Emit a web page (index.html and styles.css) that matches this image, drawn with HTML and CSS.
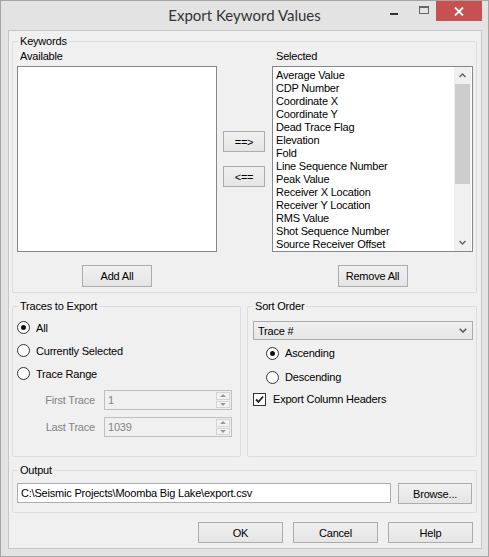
FILE: index.html
```html
<!DOCTYPE html>
<html lang="en">
<head>
    <meta charset="UTF-8">
    <title>Export Keyword Values</title>
    <link rel="stylesheet" href="styles.css">
</head>
<body>
<div class="window">

    <!-- タイトルバー -->
    <div class="titlebar">
        <div class="title">Export Keyword Values</div>
        <div class="tb-btn tb-min"><span class="min-bar"></span></div>
        <div class="tb-btn tb-max"><span class="max-box"></span></div>
        <div class="tb-btn tb-close">
            <svg width="10" height="9" viewBox="0 0 10 9"><path d="M1 0.5 L9 8.5 M9 0.5 L1 8.5" stroke="#fff" stroke-width="1.8" fill="none"/></svg>
        </div>
    </div>

    <div class="client">

        <!-- Keywords -->
        <fieldset class="group keywords">
            <legend>Keywords</legend>
            <div class="kw-cols">
                <div class="kw-col">
                    <div class="kw-label">Available</div>
                    <div class="listbox"></div>
                    <div class="kw-foot"><button class="btn btn-all">Add All</button></div>
                </div>
                <div class="kw-mid">
                    <button class="btn btn-arrow">==&gt;</button>
                    <button class="btn btn-arrow">&lt;==</button>
                </div>
                <div class="kw-col kw-right">
                    <div class="kw-label">Selected</div>
                    <div class="listbox">
                        <div class="items">
                            <div>Average Value</div>
                            <div>CDP Number</div>
                            <div>Coordinate X</div>
                            <div>Coordinate Y</div>
                            <div>Dead Trace Flag</div>
                            <div>Elevation</div>
                            <div>Fold</div>
                            <div>Line Sequence Number</div>
                            <div>Peak Value</div>
                            <div>Receiver X Location</div>
                            <div>Receiver Y Location</div>
                            <div>RMS Value</div>
                            <div>Shot Sequence Number</div>
                            <div>Source Receiver Offset</div>
                        </div>
                        <div class="vscroll">
                            <div class="sb-arrow"><svg width="7" height="5" viewBox="0 0 7 5"><path d="M0.5 4 L3.5 1 L6.5 4" stroke="#606060" stroke-width="1.4" fill="none"/></svg></div>
                            <div class="sb-thumb"></div>
                            <div class="sb-track"></div>
                            <div class="sb-arrow"><svg width="7" height="5" viewBox="0 0 7 5"><path d="M0.5 1 L3.5 4 L6.5 1" stroke="#606060" stroke-width="1.4" fill="none"/></svg></div>
                        </div>
                    </div>
                    <div class="kw-foot"><button class="btn btn-all">Remove All</button></div>
                </div>
            </div>
        </fieldset>

        <div class="mid-row">
            <!-- Traces to Export -->
            <fieldset class="group traces">
                <legend>Traces to Export</legend>
                <div class="radios">
                    <label class="opt"><span class="radio on"></span>All</label>
                    <label class="opt"><span class="radio"></span>Currently Selected</label>
                    <label class="opt"><span class="radio"></span>Trace Range</label>
                </div>
                <div class="spin-row">
                    <span class="spin-label">First Trace</span>
                    <div class="spin"><span class="spin-val">1</span><span class="spin-btns"><i class="up"></i><i class="down"></i></span></div>
                </div>
                <div class="spin-row">
                    <span class="spin-label">Last Trace</span>
                    <div class="spin"><span class="spin-val">1039</span><span class="spin-btns"><i class="up"></i><i class="down"></i></span></div>
                </div>
            </fieldset>

            <!-- Sort Order -->
            <fieldset class="group sort">
                <legend>Sort Order</legend>
                <div class="combo">
                    <span>Trace #</span>
                    <svg width="8" height="5" viewBox="0 0 8 5"><path d="M0.7 0.7 L4 4 L7.3 0.7" stroke="#555" stroke-width="1.5" fill="none"/></svg>
                </div>
                <div class="sort-radios">
                    <label class="opt"><span class="radio on"></span>Ascending</label>
                    <label class="opt"><span class="radio"></span>Descending</label>
                </div>
                <label class="check-row"><span class="check"><svg width="9" height="9" viewBox="0 0 9 9"><path d="M1 4.5 L3.5 7 L8 1.5" stroke="#222" stroke-width="1.8" fill="none"/></svg></span>Export Column Headers</label>
            </fieldset>
        </div>

        <!-- Output -->
        <fieldset class="group output">
            <legend>Output</legend>
            <div class="out-row">
                <div class="textbox">C:\Seismic Projects\Moomba Big Lake\export.csv</div>
                <button class="btn btn-browse">Browse...</button>
            </div>
        </fieldset>

        <div class="dlg-buttons">
            <button class="btn btn-dlg">OK</button>
            <button class="btn btn-dlg">Cancel</button>
            <button class="btn btn-dlg">Help</button>
        </div>
    </div>
</div>
</body>
</html>
```

FILE: styles.css
```css
/* ダイアログ全体 */
body {
    margin: 0;
    font-family: "Liberation Sans", Arial, sans-serif;
    font-size: 11px;
    letter-spacing: -0.2px;
    color: #000;
}

.window {
    width: 489px;
    height: 557px;
    box-sizing: border-box;
    border: 1px solid #a5a5a5;
    background: #e3e3e3;
    display: flex;
    flex-direction: column;
}

/* タイトルバー */
.titlebar {
    height: 29px;
    display: grid;
    grid-template-columns: 1fr 26px 26px 46px;
    margin-right: 6px;
}

.title {
    grid-column: 1 / -1;
    grid-row: 1;
    text-align: center;
    font-family: "Lato", "Open Sans", sans-serif;
    font-size: 15px;
    letter-spacing: 0;
    line-height: 29px;
    color: #333;
    margin-left: 6px;
}

.tb-btn {
    grid-row: 1;
    height: 20px;
    display: flex;
    align-items: center;
    justify-content: center;
}

.tb-min { grid-column: 2; }
.tb-max { grid-column: 3; }
.tb-close {
    grid-column: 4;
    background: #c75050;
}

.min-bar {
    width: 8px;
    height: 2px;
    background: #333;
    margin-top: 5px;
    margin-right: 6px;
}

.max-box {
    width: 8px;
    height: 5px;
    border: 1px solid #666;
    border-top-width: 2px;
    margin-top: -3px;
    margin-left: 2px;
}

.client {
    flex: 1;
    margin: 0 6px 7px 7px;
    border: 1px solid #c6c6c6;
    background: #f0f0f0;
    padding: 4px 4px 0 3px;
}

/* グループボックス */
.group {
    margin: 0;
    padding: 0;
    border: 1px solid #dcdcdc;
    border-radius: 2px;
    min-width: 0;
}

.group legend {
    margin-left: 1px;
    padding: 0 2px;
    line-height: 13px;
}

.keywords {
    padding: 0 3px 5px 4px;
}

.kw-cols {
    display: flex;
}

.kw-col {
    width: 200px;
}

.kw-right {
    width: 201px;
}

.kw-label {
    margin-top: 2px;
    line-height: 13px;
    padding-left: 3px;
}

.kw-right .kw-label {
    padding-left: 4px;
}

.listbox {
    margin-top: 3px;
    height: 186px;
    box-sizing: border-box;
    border: 1px solid #828790;
    background: #fff;
    display: flex;
}

.items {
    flex: 1;
    padding: 2px 0 0 3px;
    line-height: 13px;
    white-space: nowrap;
    overflow: hidden;
}

.vscroll {
    width: 17px;
    display: flex;
    flex-direction: column;
    background: #f0f0f0;
    margin-right: 1px;
}

.sb-arrow {
    height: 17px;
    display: flex;
    align-items: center;
    justify-content: center;
}

.sb-thumb {
    height: 100px;
    margin: 0 1px;
    background: #cdcdcd;
}

.sb-track {
    flex: 1;
}

.kw-foot {
    margin-top: 13px;
    display: flex;
    justify-content: center;
}

.kw-mid {
    width: 55px;
    padding-top: 83px;
    box-sizing: border-box;
    display: flex;
    flex-direction: column;
    gap: 14px;
    padding-left: 6px;
}

/* ボタン */
.btn {
    font-family: "Liberation Sans", Arial, sans-serif;
    font-size: 11px;
    letter-spacing: -0.2px;
    color: #000;
    border: 1px solid #acacac;
    background: linear-gradient(#f0f0f0, #e5e5e5);
    padding: 0;
    box-sizing: border-box;
}

.btn-arrow {
    width: 42px;
    height: 21px;
}

.btn-all {
    width: 70px;
    height: 22px;
}

/* 中段 */
.mid-row {
    display: flex;
    gap: 6px;
    margin-top: 7px;
}

.traces {
    width: 229px;
    height: 157px;
    box-sizing: border-box;
    padding: 3px 0 0 4px;
}

.sort {
    width: 230px;
    height: 157px;
    box-sizing: border-box;
    padding: 8px 3px 0 5px;
}

.sort legend {
    margin-left: 0;
}

.opt {
    display: flex;
    align-items: center;
    height: 23px;
}

.radio {
    width: 11px;
    height: 11px;
    border: 1px solid #333;
    border-radius: 50%;
    background: #fff;
    margin-right: 6px;
    display: flex;
    align-items: center;
    justify-content: center;
}

.radio.on::after {
    content: "";
    width: 5px;
    height: 5px;
    border-radius: 50%;
    background: #111;
}

.spin-row {
    display: flex;
    align-items: center;
    margin-top: 5px;
}

.spin-row + .spin-row {
    margin-top: 7px;
}

.spin-label {
    width: 78px;
    text-align: right;
    color: #838383;
    margin-right: 9px;
}

.spin {
    width: 128px;
    height: 20px;
    box-sizing: border-box;
    border: 1px solid #bfbfbf;
    display: flex;
    align-items: center;
    padding-left: 3px;
    color: #838383;
}

.spin-val {
    flex: 1;
}

.spin-btns {
    width: 14px;
    height: 16px;
    margin-right: 1px;
    display: flex;
    flex-direction: column;
    gap: 1px;
}

.spin-btns i {
    flex: 1;
    border: 1px solid #d4d4d4;
    background: #f3f3f3;
    display: flex;
    align-items: center;
    justify-content: center;
}

.spin-btns i::after {
    content: "";
    border-left: 3px solid transparent;
    border-right: 3px solid transparent;
}

.spin-btns .up::after {
    border-bottom: 3px solid #9a9a9a;
}

.spin-btns .down::after {
    border-top: 3px solid #9a9a9a;
}

.combo {
    height: 19px;
    box-sizing: border-box;
    border: 1px solid #acacac;
    background: linear-gradient(#f0f0f0, #e5e5e5);
    display: flex;
    align-items: center;
    justify-content: space-between;
    padding: 0 5px 0 4px;
}

.sort-radios {
    padding-left: 13px;
    margin-top: 1px;
}

.sort-radios .opt {
    height: 24px;
}

.check-row {
    display: flex;
    align-items: center;
    height: 20px;
}

.check {
    width: 11px;
    height: 11px;
    border: 1px solid #333;
    background: #fff;
    margin-right: 7px;
    display: flex;
    align-items: center;
    justify-content: center;
}

/* 出力 */
.output {
    margin-top: 7px;
    padding: 6px 4px 8px 4px;
}

.out-row {
    display: flex;
    gap: 7px;
}

.textbox {
    width: 375px;
    height: 20px;
    box-sizing: border-box;
    border: 1px solid #abadb3;
    background: #fff;
    padding-left: 3px;
    line-height: 18px;
    white-space: nowrap;
}

.btn-browse {
    width: 74px;
    height: 21px;
}

.dlg-buttons {
    display: flex;
    justify-content: flex-end;
    gap: 10px;
    margin-top: 9px;
    padding-right: 4px;
}

.btn-dlg {
    width: 85px;
    height: 21px;
}
```
